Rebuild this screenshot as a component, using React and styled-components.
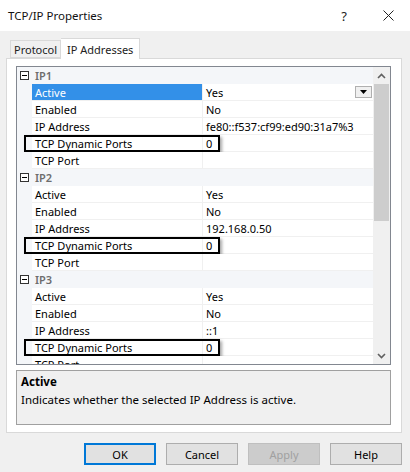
import React from "react";
import styled, { createGlobalStyle } from "styled-components";

const GlobalStyle = createGlobalStyle`
  html, body {
    margin: 0;
    padding: 0;
    background: #f0f0f0;
  }
  body {
    font-family: "Noto Sans", "Open Sans", "Liberation Sans", sans-serif;
    font-size: 11px;
    color: #000;
  }
`;

const groups = [
  { name: "IP1", address: "fe80::f537:cf99:ed90:31a7%3", selected: true },
  { name: "IP2", address: "192.168.0.50" },
  { name: "IP3", address: "::1" },
];

const Window = styled.div`
  width: 410px;
  height: 472px;
  display: flex;
  flex-direction: column;
  background: #f0f0f0;
  overflow: hidden;
`;

const TitleBar = styled.div`
  height: 31px;
  background: #fff;
  display: flex;
  align-items: center;
  padding-left: 8px;
  flex-shrink: 0;
`;

const Title = styled.div`
  flex: 1;
  font-size: 11.5px;
  color: #111;
`;

const TitleButton = styled.div`
  width: 44px;
  display: flex;
  justify-content: center;
  font-size: 13px;
  color: #222;
`;

const Body = styled.div`
  padding: 7px 8px 0 6px;
  display: flex;
  flex-direction: column;
`;

const Tabs = styled.div`
  display: flex;
  align-items: flex-end;
  height: 20px;
  padding-left: 4px;
  position: relative;
  z-index: 1;
`;

const Tab = styled.div`
  height: ${(p) => (p.$active ? "21px" : "18px")};
  padding: 0 ${(p) => (p.$active ? "6px" : "3px")};
  margin-bottom: ${(p) => (p.$active ? "-1px" : "0")};
  background: ${(p) => (p.$active ? "#fff" : "#f0f0f0")};
  border: 1px solid #d9d9d9;
  border-bottom: ${(p) => (p.$active ? "none" : "1px solid #d9d9d9")};
  border-left: ${(p) => (p.$active ? "none" : "1px solid #d9d9d9")};
  box-sizing: border-box;
  display: flex;
  align-items: center;
  color: #222;
`;

const Panel = styled.div`
  background: #fff;
  border: 1px solid #d9d9d9;
  height: 375px;
  box-sizing: border-box;
  padding: 7px 10px 0 9px;
  display: flex;
  flex-direction: column;
  gap: 5px;
`;

const Grid = styled.div`
  height: 299px;
  box-sizing: border-box;
  border: 1px solid #828790;
  display: flex;
  flex-shrink: 0;
`;

const GridBody = styled.div`
  flex: 1;
  overflow: hidden;
  background: #fff;
`;

const Row = styled.div`
  position: relative;
  display: grid;
  grid-template-columns: 15px 171px 1fr;
  height: 17px;
  box-sizing: border-box;
`;

const Gutter = styled.div`
  background: #f4f6f9;
  display: flex;
  align-items: center;
  justify-content: center;
`;

const CategoryLabel = styled.div`
  grid-column: 2 / 4;
  background: #f4f6f9;
  color: #6d6d6d;
  padding-left: 3px;
  display: flex;
  align-items: center;
  font-weight: 600;
`;

const Cell = styled.div`
  display: flex;
  align-items: center;
  padding-left: 3px;
  border-bottom: 1px solid #f0f0f0;
  border-right: ${(p) => (p.$name ? "1px solid #f0f0f0" : "none")};
  background: ${(p) => (p.$selected ? "#3390e8" : "#fff")};
  color: ${(p) => (p.$selected ? "#fff" : "#000")};
  white-space: nowrap;
  overflow: hidden;
  position: relative;
`;

const MinusBox = styled.div`
  width: 9px;
  height: 9px;
  border: 1px solid #333;
  box-sizing: border-box;
  background: #fff;
  position: relative;
  &::after {
    content: "";
    position: absolute;
    left: 1px;
    right: 1px;
    top: 3px;
    height: 1px;
    background: #000;
  }
`;

const DropButton = styled.div`
  position: absolute;
  right: 1px;
  top: 2px;
  width: 17px;
  height: 12px;
  box-sizing: border-box;
  background: #f0f0f0;
  border: 1px solid #b0b0b0;
  display: flex;
  align-items: center;
  justify-content: center;
`;

const Callout = styled.div`
  position: absolute;
  left: 7px;
  top: 0;
  width: 196px;
  height: 17px;
  box-sizing: border-box;
  border: 2px solid #000;
  box-shadow: 2px 2px 3px rgba(0, 0, 0, 0.35);
  pointer-events: none;
`;

const Scrollbar = styled.div`
  width: 17px;
  background: #f0f0f0;
  display: flex;
  flex-direction: column;
`;

const ScrollArrow = styled.div`
  height: 17px;
  display: flex;
  align-items: center;
  justify-content: center;
`;

const ScrollTrack = styled.div`
  flex: 1;
`;

const Thumb = styled.div`
  height: 137px;
  background: #cdcdcd;
  margin: 0 1px;
`;

const Description = styled.div`
  height: 55px;
  box-sizing: border-box;
  border: 1px solid #a0a0a0;
  background: #f0f0f0;
  padding: 3px 4px;
  display: flex;
  flex-direction: column;
  gap: 3px;
  font-size: 11.5px;
`;

const DescTitle = styled.div`
  font-weight: 700;
`;

const ButtonRow = styled.div`
  display: flex;
  justify-content: flex-end;
  gap: 10px;
  padding: 10px 8px 0 0;
`;

const Button = styled.div`
  width: 72px;
  height: 22px;
  box-sizing: border-box;
  display: flex;
  align-items: center;
  justify-content: center;
  background: ${(p) => (p.$disabled ? "#cccccc" : "#e1e1e1")};
  color: ${(p) => (p.$disabled ? "#a0a0a0" : "#000")};
  border: ${(p) => (p.$default ? "2px solid #0078d7" : p.$disabled ? "1px solid #bfbfbf" : "1px solid #adadad")};
`;

const Chevron = ({ up }) => (
  <svg width="9" height="6" viewBox="0 0 9 6">
    <path
      d={up ? "M1 5 L4.5 1.5 L8 5" : "M1 1 L4.5 4.5 L8 1"}
      fill="none"
      stroke="#606060"
      strokeWidth="1.6"
    />
  </svg>
);

const Caret = () => (
  <svg width="7" height="4" viewBox="0 0 7 4">
    <path d="M0 0 H7 L3.5 4 Z" fill="#000" />
  </svg>
);

const Property = ({ name, value, selected, dropdown, callout }) => (
  <Row>
    <Gutter />
    <Cell $name $selected={selected}>
      {name}
    </Cell>
    <Cell>
      {value}
      {dropdown && (
        <DropButton>
          <Caret />
        </DropButton>
      )}
    </Cell>
    {callout && <Callout />}
  </Row>
);

const Group = ({ name, address, selected }) => (
  <>
    <Row>
      <Gutter>
        <MinusBox />
      </Gutter>
      <CategoryLabel>{name}</CategoryLabel>
    </Row>
    <Property name="Active" value="Yes" selected={selected} dropdown={selected} />
    <Property name="Enabled" value="No" />
    <Property name="IP Address" value={address} />
    <Property name="TCP Dynamic Ports" value="0" callout />
    <Property name="TCP Port" value="" />
  </>
);

const App = () => {
  return (
    <>
      <GlobalStyle />
      <Window>
        <TitleBar>
          <Title>TCP/IP Properties</Title>
          <TitleButton>?</TitleButton>
          <TitleButton>
            <svg width="11" height="11" viewBox="0 0 11 11">
              <path d="M0.5 0.5 L10.5 10.5 M10.5 0.5 L0.5 10.5" stroke="#222" strokeWidth="1" />
            </svg>
          </TitleButton>
        </TitleBar>
        <Body>
          <Tabs>
            <Tab>Protocol</Tab>
            <Tab $active>IP Addresses</Tab>
          </Tabs>
          <Panel>
            <Grid>
              <GridBody>
                {groups.map((g) => (
                  <Group key={g.name} {...g} />
                ))}
              </GridBody>
              <Scrollbar>
                <ScrollArrow>
                  <Chevron up />
                </ScrollArrow>
                <ScrollTrack>
                  <Thumb />
                </ScrollTrack>
                <ScrollArrow>
                  <Chevron />
                </ScrollArrow>
              </Scrollbar>
            </Grid>
            <Description>
              <DescTitle>Active</DescTitle>
              <div>Indicates whether the selected IP Address is active.</div>
            </Description>
          </Panel>
        </Body>
        <ButtonRow>
          <Button $default>OK</Button>
          <Button>Cancel</Button>
          <Button $disabled>Apply</Button>
          <Button>Help</Button>
        </ButtonRow>
      </Window>
    </>
  );
};

export default App;
